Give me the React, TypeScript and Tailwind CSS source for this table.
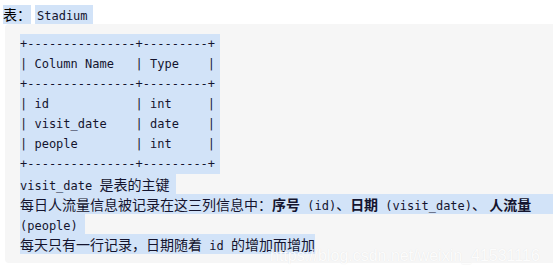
const mono = "font-['DejaVu_Sans_Mono',monospace] text-[12px]";
const cjk = "font-['Noto_Sans_CJK_SC',sans-serif] text-[14px]";

const tableLines = [
  '+---------------+---------+',
  '| Column Name   | Type    |',
  '+---------------+---------+',
  '| id            | int     |',
  '| visit_date    | date    |',
  '| people        | int     |',
  '+---------------+---------+',
];

function Mono({ children }: { children: React.ReactNode }) {
  return <span className={mono}>{children}</span>;
}

function Cjk({ children, bold }: { children: React.ReactNode; bold?: boolean }) {
  return <span className={`${cjk} ${bold ? 'font-bold' : ''}`}>{children}</span>;
}

export default function App() {
  return (
    <div className="relative w-[553px] h-[274px] overflow-hidden bg-white text-[#14142e]">
      {/* header */}
      <div className="flex h-[24px] pt-[5px] pl-[3px] leading-[19px]">
        <span className="bg-[#d2e3f8] text-black">
          <Cjk>表：</Cjk>
        </span>
        <span className="ml-[4px] pl-[2px] pr-[5px] bg-[#d2e3f8]">
          <Mono>Stadium</Mono>
        </span>
      </div>

      {/* code block */}
      <div className="ml-[5px] w-[600px] h-[239px] rounded-[4px] bg-[#f6f6f6] pt-[10px] pl-[15px]">
        <div className="w-[200px] bg-[#d2e3f8]">
          {tableLines.map((line, i) => (
            <div key={i} className={`h-[20px] leading-[20px] whitespace-pre ${mono}`}>
              {line}
            </div>
          ))}
        </div>

        <div className="h-[20px] leading-[20px] whitespace-pre">
          <span className="inline-block h-[20px] pr-[7px] bg-[#d2e3f8]">
            <Mono>visit_date </Mono>
            <Cjk>是表的主键</Cjk>
          </span>
        </div>

        <div className="h-[20px] leading-[20px] whitespace-pre bg-[#d2e3f8]">
          <Cjk>每日人流量信息被记录在这三列信息中：</Cjk>
          <Cjk bold>序号</Cjk>
          <Mono> (id)</Mono>
          <Cjk>、</Cjk>
          <Cjk bold>日期</Cjk>
          <Mono> (visit_date)</Mono>
          <Cjk>、 </Cjk>
          <Cjk bold>人流量</Cjk>
        </div>

        <div className="h-[20px] leading-[20px] whitespace-pre">
          <span className="inline-block h-[20px] pr-[7px] bg-[#d2e3f8]">
            <Mono>(people)</Mono>
          </span>
        </div>

        <div className="h-[20px] leading-[20px] whitespace-pre">
          <span className="inline-block h-[20px] bg-[#d2e3f8]">
            <Cjk>每天只有一行记录，日期随着</Cjk>
            <Mono> id </Mono>
            <Cjk>的增加而增加</Cjk>
          </span>
        </div>
      </div>

      {/* watermark */}
      <div className="absolute left-[270px] top-[246px] font-['Liberation_Sans',Arial,sans-serif] text-[16px] leading-[20px] text-white/90 [text-shadow:0_0_1px_rgba(0,0,0,0.1)]">
        https://blog.csdn.net/weixin_41531116
      </div>
    </div>
  );
}
